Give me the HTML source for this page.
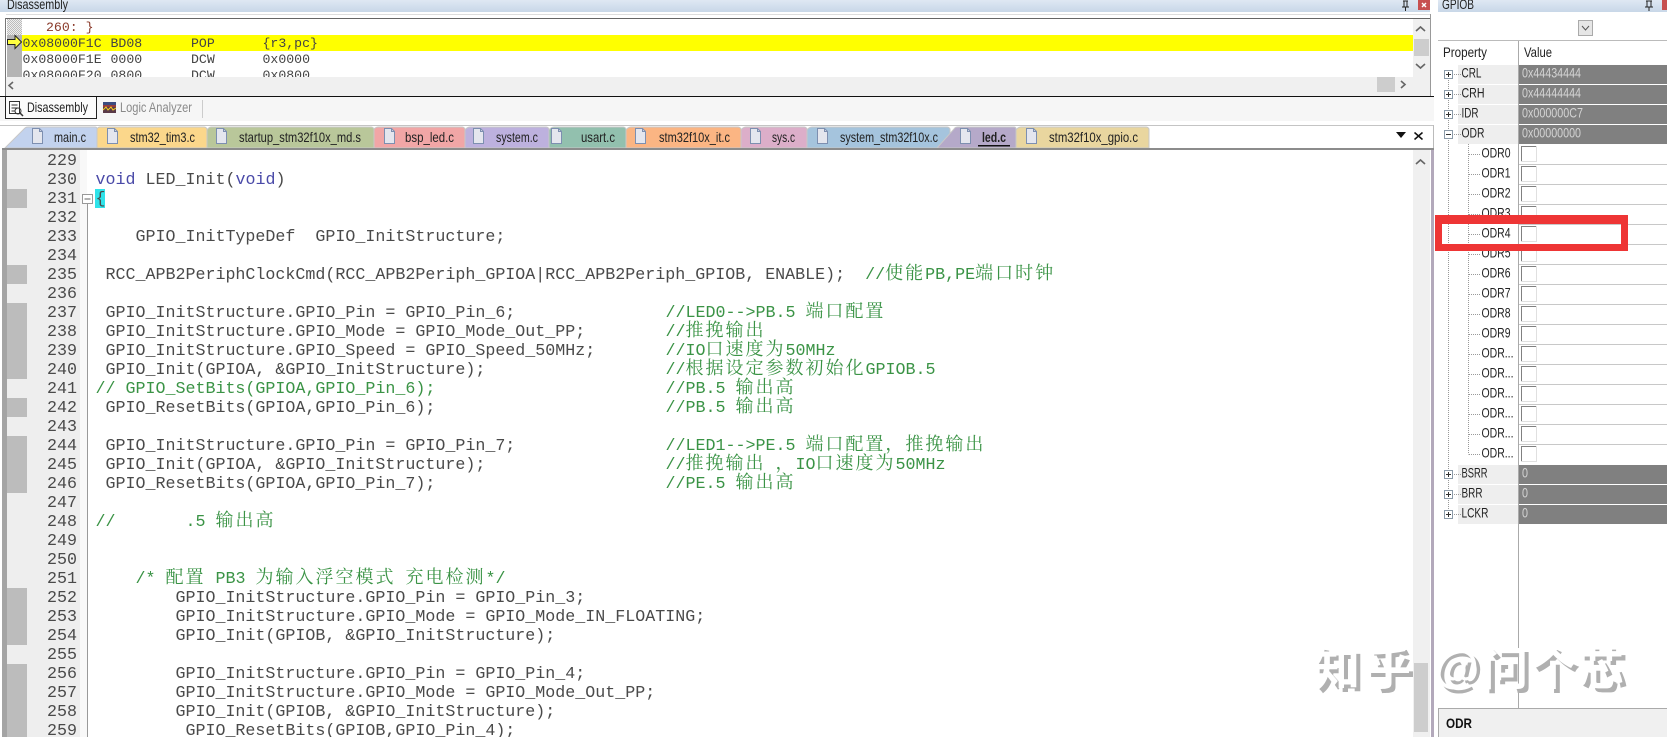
<!DOCTYPE html>
<html lang="zh"><head><meta charset="utf-8"><title>Keil Debug</title>
<style>
html,body{margin:0;padding:0;background:#fff}
#p{position:relative;width:1667px;height:737px;overflow:hidden;background:#fff}
#s{position:absolute;left:0;top:0}
svg text{font-family:"Liberation Sans","Noto Sans CJK SC",sans-serif;font-size:14px;fill:#222}
.m{font-family:"Liberation Mono",monospace!important;font-size:13.2px!important;fill:#444}
.l,.n{position:absolute;height:19px;line-height:19px;margin-top:1px;font-family:"Liberation Mono","Noto Serif CJK SC",monospace;font-size:16.67px;white-space:pre;color:#4a4a4a}
.l{left:95.5px}
.n{left:47px;width:30px;text-align:right}
.l u{text-decoration:none;color:#4a4aa8}
.l i{font-style:normal;color:#3a9345}
.l em{font-style:normal;color:#3a9345;position:absolute;left:570px;top:0}
.l b{font-family:"Noto Serif CJK SC","Noto Sans CJK SC",serif;font-weight:400;font-size:18px;letter-spacing:2px;line-height:0}
.w{position:absolute;top:633px;height:66px;line-height:66px;font-family:"Noto Sans CJK SC",sans-serif;font-weight:700;font-size:46px;color:#fff;text-shadow:4px 4px 0 #b0b0b0}
</style></head><body><div id="p">
<svg id="s" width="1667" height="737" viewBox="0 0 1667 737" xmlns="http://www.w3.org/2000/svg">
<defs>
<linearGradient id="t" x1="0" y1="0" x2="0" y2="1"><stop offset="0" stop-color="#dfe8f3"/><stop offset="1" stop-color="#c8d7e8"/></linearGradient>
<pattern id="h" width="2" height="2" patternUnits="userSpaceOnUse"><rect width="2" height="2" fill="#eee"/><rect width="1" height="1" fill="#bbb"/><rect x="1" y="1" width="1" height="1" fill="#bbb"/></pattern>
<g id="d"><path d="M.5 .5H7.5L10.5 3.5V15.5H.5Z" fill="#e4e6ee" stroke="#7d8fb0"/><path d="M7.5 .5V3.5H10.5" fill="none" stroke="#7d8fb0"/></g>
<g id="pl"><rect x=".5" y=".5" width="8" height="8" fill="#fff" stroke="#8b9aa8"/><path d="M2 4.5H7M4.5 2V7" stroke="#333"/></g>
<g id="mi"><rect x=".5" y=".5" width="8" height="8" fill="#fff" stroke="#8b9aa8"/><path d="M2 4.5H7" stroke="#333"/></g>
<g id="cb"><rect x=".5" y=".5" width="15" height="15" fill="#fff" stroke="#e0e0e0"/><path d="M.5 15V.5H15" fill="none" stroke="#808080"/></g>
</defs>

<!-- title bars -->
<rect x="0" y="0" width="1430" height="12" fill="url(#t)"/>
<text x="7" y="9" textLength="61" lengthAdjust="spacingAndGlyphs">Disassembly</text>
<path d="M1403 1H1408M1404 1V7H1407V1M1402 7H1409M1405.5 7V11" stroke="#222" fill="none"/>
<rect x="1418" y="0" width="12" height="10" fill="#c75050"/>
<path d="M1422 3L1426 7M1426 3L1422 7" stroke="#fff" stroke-width="1.4"/>

<!-- disassembly panel -->
<rect x="6" y="14" width="1425" height="1" fill="#ddd"/>
<rect x="6" y="18" width="1424" height="1" fill="#666"/>
<rect x="5" y="18" width="1" height="78" fill="#777"/>
<rect x="1430" y="14" width="1" height="82" fill="#999"/>
<rect x="7" y="19" width="15" height="16" fill="url(#h)"/>
<rect x="7" y="35" width="15" height="42" fill="#b4b4b4"/>
<rect x="22" y="35" width="1391" height="16" fill="#ffff00"/>
<text class="m" x="46" y="31" style="fill:#8a3a2a">260: }</text>
<text class="m" x="22.5" y="47">0x08000F1C</text><text class="m" x="110.5" y="47">BD08</text><text class="m" x="191" y="47">POP</text><text class="m" x="262.5" y="47">{r3,pc}</text>
<text class="m" x="22.5" y="63">0x08000F1E</text><text class="m" x="110.5" y="63">0000</text><text class="m" x="191" y="63">DCW</text><text class="m" x="262.5" y="63">0x0000</text>
<text class="m" x="22.5" y="79">0x08000F20</text><text class="m" x="110.5" y="79">0800</text><text class="m" x="191" y="79">DCW</text><text class="m" x="262.5" y="79">0x0800</text>
<path d="M7.5 39.5H15V35.5L21.5 42L15 48.5V44.5H7.5Z" fill="#ffff40" stroke="#222"/>
<rect x="6" y="77" width="1424" height="19" fill="#f0f0f0"/>
<rect x="1413" y="19" width="17" height="58" fill="#f0f0f0"/>
<rect x="1414" y="39" width="15" height="17" fill="#cdcdcd"/>
<rect x="1377" y="77" width="18" height="15" fill="#cdcdcd"/>
<path d="M1416 31L1420.500 27L1425 31M1416 64L1420.500 68L1425 64" fill="none" stroke="#666" stroke-width="1.6"/>
<path d="M13 82L9 85.500L13 89M1401 81L1405 84.500L1401 88" fill="none" stroke="#666" stroke-width="1.6"/>

<!-- lower tab strip -->
<rect x="0" y="96" width="1434" height="25" fill="#f6f6f6"/>
<rect x="0" y="96" width="1434" height="1" fill="#111"/>
<rect x="6" y="97" width="90" height="21" fill="#fbfbfb"/>
<path d="M5.500 97V118.500H96.500V97" fill="none" stroke="#222"/>
<g fill="none" stroke="#333"><rect x="9.500" y="101.500" width="10" height="12" fill="#fff"/><path d="M11.500 105H17.500M11.500 108H17.500M11.500 111H15"/><circle cx="18" cy="111" r="3"/><path d="M20 113L23 116" stroke-width="1.500"/></g>
<text x="27" y="112" textLength="61" lengthAdjust="spacingAndGlyphs">Disassembly</text>
<rect x="103" y="102" width="13" height="11" fill="#5a3a48"/><rect x="103" y="102" width="13" height="3" fill="#3c4c80"/>
<path d="M103 110L106 107L108 110L111 107L113 110L116 108" stroke="#f5d020" fill="none"/><path d="M103 106H116" stroke="#d04030"/>
<text x="120" y="112" textLength="72" lengthAdjust="spacingAndGlyphs" style="fill:#8a8a8a">Logic Analyzer</text>
<rect x="202" y="100" width="1" height="18" fill="#ccc"/>

<!-- editor tabs -->
<rect x="0" y="125" width="1434" height="1" fill="#c4c4c4"/>
<rect x="1433" y="125" width="1" height="25" fill="#bbb"/>
<g stroke="#c8c8c8" stroke-width="1">
<path d="M5 148L25 128Q26 127 28 127H95Q97 127 97 129V148Z" fill="#c2d2ee"/>
<path d="M97 148V129Q98 127 100 127H204Q206 127 207 129V148Z" fill="#fbd78b"/>
<path d="M207 148V130Q209 127 211 127H371Q373 127 374 129V148Z" fill="#b9c79a"/>
<path d="M374 148V129Q376 127 378 127H462Q464 127 465 129V148Z" fill="#f1a6a6"/>
<path d="M465 148V130Q467 127 470 127H546Q548 127 549 129V148Z" fill="#bdb1de"/>
<path d="M549 148V130Q551 127 554 127H623Q625 127 626 129V148Z" fill="#92c0ae"/>
<path d="M626 148V130Q628 127 631 127H738Q740 127 741 129V148Z" fill="#fbb583"/>
<path d="M741 148V130Q743 127 746 127H804Q806 127 807 129V148Z" fill="#dcaec9"/>
<path d="M807 148V130Q809 127 812 127H947Q949 127 950 129V148Z" fill="#a5c4dd"/>
<path d="M937 148L954 129Q955 127 958 127H1014Q1016 127 1016 129V148Z" fill="#b5a9c9"/>
<path d="M1016 148V130Q1018 127 1021 127H1146Q1148 127 1149 129V148Z" fill="#e9d69f"/>
</g>
<use href="#d" x="32" y="128"/><use href="#d" x="107" y="128"/><use href="#d" x="216" y="128"/><use href="#d" x="384" y="128"/><use href="#d" x="473" y="128"/><use href="#d" x="551" y="128"/><use href="#d" x="635" y="128"/><use href="#d" x="750" y="128"/><use href="#d" x="817" y="128"/><use href="#d" x="960" y="128"/><use href="#d" x="1026" y="128"/>
<g>
<text x="54" y="142" textLength="32" lengthAdjust="spacingAndGlyphs">main.c</text>
<text x="130" y="142" textLength="65" lengthAdjust="spacingAndGlyphs">stm32_tim3.c</text>
<text x="239" y="142" textLength="122" lengthAdjust="spacingAndGlyphs">startup_stm32f10x_md.s</text>
<text x="405" y="142" textLength="49" lengthAdjust="spacingAndGlyphs">bsp_led.c</text>
<text x="496" y="142" textLength="42" lengthAdjust="spacingAndGlyphs">system.c</text>
<text x="581" y="142" textLength="34" lengthAdjust="spacingAndGlyphs">usart.c</text>
<text x="659" y="142" textLength="71" lengthAdjust="spacingAndGlyphs">stm32f10x_it.c</text>
<text x="772" y="142" textLength="23" lengthAdjust="spacingAndGlyphs">sys.c</text>
<text x="840" y="142" textLength="98" lengthAdjust="spacingAndGlyphs">system_stm32f10x.c</text>
<text x="982" y="142" textLength="24" lengthAdjust="spacingAndGlyphs" font-weight="700">led.c</text>
<text x="1049" y="142" textLength="89" lengthAdjust="spacingAndGlyphs">stm32f10x_gpio.c</text>
</g>
<rect x="978" y="145" width="32" height="1.500" fill="#111"/>
<path d="M1396 132H1406L1401 138Z" fill="#111"/>
<path d="M1414.500 132.500L1422.500 139.500M1422.500 132.500L1414.500 139.500" stroke="#111" stroke-width="1.500"/>
<rect x="2" y="148" width="1432" height="2" fill="#8c8c8c"/>

<!-- editor gutter -->
<rect x="2" y="150" width="5" height="587" fill="#a4a4a4"/>
<rect x="7" y="150" width="73" height="587" fill="#eeeeee"/>
<rect x="80" y="150" width="7" height="587" fill="#f8f8f8"/>
<g fill="#bcbcbc">
<rect x="7" y="189" width="20" height="19"/><rect x="7" y="265" width="20" height="19"/><rect x="7" y="303" width="20" height="76"/><rect x="7" y="398" width="20" height="19"/><rect x="7" y="436" width="20" height="57"/><rect x="7" y="588" width="20" height="57"/><rect x="7" y="664" width="20" height="73"/>
</g>
<rect x="87" y="204" width="1" height="533" fill="#999"/>
<rect x="82.500" y="194.500" width="10" height="9" fill="#fff" stroke="#999"/><path d="M84.500 199H90.500" stroke="#666"/>
<rect x="95" y="189" width="10" height="19" fill="#2fe3ea"/>

<!-- editor scrollbar -->
<rect x="1413" y="150" width="17" height="587" fill="#f0f0f0"/>
<rect x="1414" y="663" width="14" height="69" fill="#cdcdcd"/>
<path d="M1416 164L1420.500 160L1425 164" fill="none" stroke="#666" stroke-width="1.600"/>
<rect x="1431" y="150" width="3" height="587" fill="#b3a9bb"/>

<!-- GPIOB panel -->
<rect x="1438" y="0" width="229" height="12" fill="url(#t)"/>
<text x="1442" y="9" textLength="32" lengthAdjust="spacingAndGlyphs">GPIOB</text>
<path d="M1646 1H1652M1647 1V7H1651V1M1645 7H1653M1649 7V11" stroke="#222" fill="none"/>
<rect x="1662" y="0" width="5" height="10" fill="#c75050"/>
<rect x="1578.500" y="20.500" width="14" height="15" fill="#e6e6e6" stroke="#aaa"/>
<path d="M1582 26L1585.500 30L1589 26" fill="none" stroke="#555"/>
<rect x="1438" y="40" width="229" height="1" fill="#bbb"/>
<rect x="1518" y="41" width="1" height="667" fill="#aaa"/>

<g fill="#eeeeee"><rect x="1458" y="65" width="60" height="19"/><rect x="1458" y="85" width="60" height="19"/><rect x="1458" y="105" width="60" height="19"/><rect x="1458" y="125" width="60" height="19"/><rect x="1458" y="465" width="60" height="19"/><rect x="1458" y="485" width="60" height="19"/><rect x="1458" y="505" width="60" height="19"/></g>
<g fill="#808080"><rect x="1519" y="65" width="148" height="19"/><rect x="1519" y="85" width="148" height="19"/><rect x="1519" y="105" width="148" height="19"/><rect x="1519" y="125" width="148" height="19"/><rect x="1519" y="465" width="148" height="19"/><rect x="1519" y="485" width="148" height="19"/><rect x="1519" y="505" width="148" height="19"/></g>
<g fill="#c8c8c8"><rect x="1519" y="164" width="148" height="1"/><rect x="1519" y="184" width="148" height="1"/><rect x="1519" y="204" width="148" height="1"/><rect x="1519" y="224" width="148" height="1"/><rect x="1519" y="244" width="148" height="1"/><rect x="1519" y="264" width="148" height="1"/><rect x="1519" y="284" width="148" height="1"/><rect x="1519" y="304" width="148" height="1"/><rect x="1519" y="324" width="148" height="1"/><rect x="1519" y="344" width="148" height="1"/><rect x="1519" y="364" width="148" height="1"/><rect x="1519" y="384" width="148" height="1"/><rect x="1519" y="404" width="148" height="1"/><rect x="1519" y="424" width="148" height="1"/><rect x="1519" y="444" width="148" height="1"/></g>

<g stroke="#999" stroke-dasharray="1 1" fill="none">
<path d="M1448.500 70V520M1468.500 144V454.500"/>
<path d="M1454 74.500H1461M1454 94.500H1461M1454 114.500H1461M1454 134.500H1461M1454 474.500H1461M1454 494.500H1461M1454 514.500H1461"/>
<path d="M1469 154.500H1481M1469 174.500H1481M1469 194.500H1481M1469 214.500H1481M1469 234.500H1481M1469 254.500H1481M1469 274.500H1481M1469 294.500H1481M1469 314.500H1481M1469 334.500H1481M1469 354.500H1481M1469 374.500H1481M1469 394.500H1481M1469 414.500H1481M1469 434.500H1481M1469 454.500H1481"/>
</g>
<use href="#pl" x="1444" y="70"/><use href="#pl" x="1444" y="90"/><use href="#pl" x="1444" y="110"/><use href="#mi" x="1444" y="130"/><use href="#pl" x="1444" y="470"/><use href="#pl" x="1444" y="490"/><use href="#pl" x="1444" y="510"/>

<g transform="translate(0,-1)">
<text x="1443" y="58" textLength="44" lengthAdjust="spacingAndGlyphs">Property</text>
<text x="1524" y="58" textLength="28" lengthAdjust="spacingAndGlyphs">Value</text>
<text x="1461.500" y="78.500" textLength="20" lengthAdjust="spacingAndGlyphs">CRL</text>
<text x="1461.500" y="98.500" textLength="23" lengthAdjust="spacingAndGlyphs">CRH</text>
<text x="1461.500" y="118.500" textLength="17" lengthAdjust="spacingAndGlyphs">IDR</text>
<text x="1461.500" y="138.500" textLength="23" lengthAdjust="spacingAndGlyphs">ODR</text>
<text x="1461.500" y="478.500" textLength="26" lengthAdjust="spacingAndGlyphs">BSRR</text>
<text x="1461.500" y="498.500" textLength="21" lengthAdjust="spacingAndGlyphs">BRR</text>
<text x="1461.500" y="518.500" textLength="27" lengthAdjust="spacingAndGlyphs">LCKR</text>
<text x="1522" y="78.500" textLength="59" lengthAdjust="spacingAndGlyphs" style="fill:#d4d4d4">0x44434444</text>
<text x="1522" y="98.500" textLength="59" lengthAdjust="spacingAndGlyphs" style="fill:#d4d4d4">0x44444444</text>
<text x="1522" y="118.500" textLength="61" lengthAdjust="spacingAndGlyphs" style="fill:#d4d4d4">0x000000C7</text>
<text x="1522" y="138.500" textLength="59" lengthAdjust="spacingAndGlyphs" style="fill:#d4d4d4">0x00000000</text>
<text x="1522" y="478.500" textLength="6" lengthAdjust="spacingAndGlyphs" style="fill:#d4d4d4">0</text>
<text x="1522" y="498.500" textLength="6" lengthAdjust="spacingAndGlyphs" style="fill:#d4d4d4">0</text>
<text x="1522" y="518.500" textLength="6" lengthAdjust="spacingAndGlyphs" style="fill:#d4d4d4">0</text>
<text x="1481.500" y="158.500" textLength="29" lengthAdjust="spacingAndGlyphs">ODR0</text>
<text x="1481.500" y="178.500" textLength="29" lengthAdjust="spacingAndGlyphs">ODR1</text>
<text x="1481.500" y="198.500" textLength="29" lengthAdjust="spacingAndGlyphs">ODR2</text>
<text x="1481.500" y="218.500" textLength="29" lengthAdjust="spacingAndGlyphs">ODR3</text>
<text x="1481.500" y="238.500" textLength="29" lengthAdjust="spacingAndGlyphs">ODR4</text>
<text x="1481.500" y="258.500" textLength="29" lengthAdjust="spacingAndGlyphs">ODR5</text>
<text x="1481.500" y="278.500" textLength="29" lengthAdjust="spacingAndGlyphs">ODR6</text>
<text x="1481.500" y="298.500" textLength="29" lengthAdjust="spacingAndGlyphs">ODR7</text>
<text x="1481.500" y="318.500" textLength="29" lengthAdjust="spacingAndGlyphs">ODR8</text>
<text x="1481.500" y="338.500" textLength="29" lengthAdjust="spacingAndGlyphs">ODR9</text>
<text x="1481.500" y="358.500" textLength="32" lengthAdjust="spacingAndGlyphs">ODR...</text>
<text x="1481.500" y="378.500" textLength="32" lengthAdjust="spacingAndGlyphs">ODR...</text>
<text x="1481.500" y="398.500" textLength="32" lengthAdjust="spacingAndGlyphs">ODR...</text>
<text x="1481.500" y="418.500" textLength="32" lengthAdjust="spacingAndGlyphs">ODR...</text>
<text x="1481.500" y="438.500" textLength="32" lengthAdjust="spacingAndGlyphs">ODR...</text>
<text x="1481.500" y="458.500" textLength="32" lengthAdjust="spacingAndGlyphs">ODR...</text>
</g>
<use href="#cb" x="1521" y="146"/><use href="#cb" x="1521" y="166"/><use href="#cb" x="1521" y="186"/><use href="#cb" x="1521" y="206"/><use href="#cb" x="1521" y="226"/><use href="#cb" x="1521" y="246"/><use href="#cb" x="1521" y="266"/><use href="#cb" x="1521" y="286"/><use href="#cb" x="1521" y="306"/><use href="#cb" x="1521" y="326"/><use href="#cb" x="1521" y="346"/><use href="#cb" x="1521" y="366"/><use href="#cb" x="1521" y="386"/><use href="#cb" x="1521" y="406"/><use href="#cb" x="1521" y="426"/><use href="#cb" x="1521" y="446"/>

<rect x="1438" y="708" width="229" height="29" fill="#f0f0f0"/>
<rect x="1438" y="708" width="229" height="1" fill="#aaa"/>
<rect x="1438" y="708" width="1" height="29" fill="#aaa"/>
<text x="1446" y="728" textLength="26" lengthAdjust="spacingAndGlyphs" font-weight="700" style="fill:#111">ODR</text>

<!-- red frame -->
<path d="M1435 215H1628V251H1435ZM1442 224V244H1621V224Z" fill="#ee3535" fill-rule="evenodd"/>
</svg>

<div class="n" style="top:151px">229</div><div class="n" style="top:170px">230</div><div class="n" style="top:189px">231</div><div class="n" style="top:208px">232</div><div class="n" style="top:227px">233</div><div class="n" style="top:246px">234</div><div class="n" style="top:265px">235</div><div class="n" style="top:284px">236</div><div class="n" style="top:303px">237</div><div class="n" style="top:322px">238</div><div class="n" style="top:341px">239</div><div class="n" style="top:360px">240</div><div class="n" style="top:379px">241</div><div class="n" style="top:398px">242</div><div class="n" style="top:417px">243</div><div class="n" style="top:436px">244</div><div class="n" style="top:455px">245</div><div class="n" style="top:474px">246</div><div class="n" style="top:493px">247</div><div class="n" style="top:512px">248</div><div class="n" style="top:531px">249</div><div class="n" style="top:550px">250</div><div class="n" style="top:569px">251</div><div class="n" style="top:588px">252</div><div class="n" style="top:607px">253</div><div class="n" style="top:626px">254</div><div class="n" style="top:645px">255</div><div class="n" style="top:664px">256</div><div class="n" style="top:683px">257</div><div class="n" style="top:702px">258</div><div class="n" style="top:721px">259</div>

<div class="l" style="top:170px"><u>void</u> LED_Init(<u>void</u>)</div>
<div class="l" style="top:189px">{</div>
<div class="l" style="top:227px">    GPIO_InitTypeDef  GPIO_InitStructure;</div>
<div class="l" style="top:265px"> RCC_APB2PeriphClockCmd(RCC_APB2Periph_GPIOA|RCC_APB2Periph_GPIOB, ENABLE);  <i>//<b>使能</b>PB,PE<b>端口时钟</b></i></div>
<div class="l" style="top:303px"> GPIO_InitStructure.GPIO_Pin = GPIO_Pin_6;<em>//LED0--&gt;PB.5 <b>端口配置</b></em></div>
<div class="l" style="top:322px"> GPIO_InitStructure.GPIO_Mode = GPIO_Mode_Out_PP;<em>//<b>推挽输出</b></em></div>
<div class="l" style="top:341px"> GPIO_InitStructure.GPIO_Speed = GPIO_Speed_50MHz;<em>//IO<b>口速度为</b>50MHz</em></div>
<div class="l" style="top:360px"> GPIO_Init(GPIOA, &amp;GPIO_InitStructure);<em>//<b>根据设定参数初始化</b>GPIOB.5</em></div>
<div class="l" style="top:379px"><i>// GPIO_SetBits(GPIOA,GPIO_Pin_6);</i><em>//PB.5 <b>输出高</b></em></div>
<div class="l" style="top:398px"> GPIO_ResetBits(GPIOA,GPIO_Pin_6);<em>//PB.5 <b>输出高</b></em></div>
<div class="l" style="top:436px"> GPIO_InitStructure.GPIO_Pin = GPIO_Pin_7;<em>//LED1--&gt;PE.5 <b>端口配置，推挽输出</b></em></div>
<div class="l" style="top:455px"> GPIO_Init(GPIOA, &amp;GPIO_InitStructure);<em>//<b>推挽输出</b> <b>，</b>IO<b>口速度为</b>50MHz</em></div>
<div class="l" style="top:474px"> GPIO_ResetBits(GPIOA,GPIO_Pin_7);<em>//PE.5 <b>输出高</b></em></div>
<div class="l" style="top:512px"><i>//       .5 <b>输出高</b></i></div>
<div class="l" style="top:569px"><i>    /* <b>配置</b> PB3 <b>为输入浮空模式</b> <b>充电检测</b>*/</i></div>
<div class="l" style="top:588px">        GPIO_InitStructure.GPIO_Pin = GPIO_Pin_3;</div>
<div class="l" style="top:607px">        GPIO_InitStructure.GPIO_Mode = GPIO_Mode_IN_FLOATING;</div>
<div class="l" style="top:626px">        GPIO_Init(GPIOB, &amp;GPIO_InitStructure);</div>
<div class="l" style="top:664px">        GPIO_InitStructure.GPIO_Pin = GPIO_Pin_4;</div>
<div class="l" style="top:683px">        GPIO_InitStructure.GPIO_Mode = GPIO_Mode_Out_PP;</div>
<div class="l" style="top:702px">        GPIO_Init(GPIOB, &amp;GPIO_InitStructure);</div>
<div class="l" style="top:721px">         GPIO_ResetBits(GPIOB,GPIO_Pin_4);</div>

<div class="w" style="left:1314px">知</div><div class="w" style="left:1365px">乎</div><div class="w" style="left:1434px;font-family:'Liberation Sans',sans-serif">@</div><div class="w" style="left:1482px">问</div><div class="w" style="left:1530px">个</div><div class="w" style="left:1578px">芯</div>
</div></body></html>
